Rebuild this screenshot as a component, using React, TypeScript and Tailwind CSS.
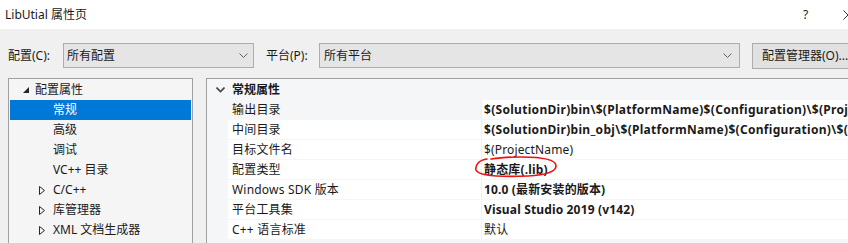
import React from "react";

const font = { fontFamily: '"Noto Sans", "Noto Sans CJK SC", sans-serif' };

function Chevron() {
  return (
    <svg width="9" height="6" viewBox="0 0 9 6">
      <polyline points="0.5,0.5 4.5,4.5 8.5,0.5" fill="none" stroke="#606060" strokeWidth="1" />
    </svg>
  );
}

function Expanded() {
  return (
    <svg width="6" height="6" viewBox="0 0 6 6">
      <polygon points="6,0 6,6 0,6" fill="#262626" />
    </svg>
  );
}

function Collapsed() {
  return (
    <svg width="6" height="9" viewBox="0 0 6 9">
      <polygon points="0.5,0.5 5.5,4.5 0.5,8.5" fill="none" stroke="#262626" strokeWidth="1" />
    </svg>
  );
}

const treeItems: { text: string; icon?: "col"; selected?: boolean }[] = [
  { text: "常规", selected: true },
  { text: "高级" },
  { text: "调试" },
  { text: "VC++ 目录" },
  { text: "C/C++", icon: "col" },
  { text: "库管理器", icon: "col" },
  { text: "XML 文档生成器", icon: "col" },
];

const rows: { label: string; value: string; bold: boolean; first?: boolean; wide?: boolean }[] = [
  { label: "输出目录", value: "$(SolutionDir)bin\\$(PlatformName)$(Configuration)\\$(Proj", bold: true, first: true, wide: true },
  { label: "中间目录", value: "$(SolutionDir)bin_obj\\$(PlatformName)$(Configuration)\\$(", bold: true, wide: true },
  { label: "目标文件名", value: "$(ProjectName)", bold: false },
  { label: "配置类型", value: "静态库(.lib)", bold: true },
  { label: "Windows SDK 版本", value: "10.0 (最新安装的版本)", bold: true },
  { label: "平台工具集", value: "Visual Studio 2019 (v142)", bold: true },
  { label: "C++ 语言标准", value: "默认", bold: false },
];

export default function App() {
  return (
    <div className="w-[848px] h-[243px] overflow-hidden bg-[#f0f0f0] text-[12px] text-[#1a1a1a] relative" style={font}>
      {/* title bar */}
      <div className="h-[29px] bg-white flex items-center pl-[5px] relative">
        <span className="text-[12px]">LibUtial 属性页</span>
        <span className="absolute left-[803px] top-[6px] text-[12px]">?</span>
        <svg className="absolute left-[843px] top-[10px]" width="10" height="10" viewBox="0 0 10 10">
          <path d="M0.5 0.5 L9.5 9.5 M9.5 0.5 L0.5 9.5" stroke="#333" strokeWidth="1" />
        </svg>
      </div>

      {/* toolbar */}
      <div className="flex items-start pt-[14px] pb-[9px] pl-[8px]">
        <span className="w-[55px] shrink-0 whitespace-nowrap leading-[25px]">配置(C):</span>
        <div className="w-[191px] shrink-0 h-[25px] border border-[#adadad] bg-[#e5e5e5] flex items-center pl-[3px] pr-[5px] justify-between">
          <span>所有配置</span>
          <Chevron />
        </div>
        <span className="ml-[12px] w-[53px] shrink-0 whitespace-nowrap leading-[25px]">平台(P):</span>
        <div className="w-[421px] shrink-0 h-[25px] border border-[#adadad] bg-[#e5e5e5] flex items-center pl-[4px] pr-[7px] justify-between">
          <span>所有平台</span>
          <Chevron />
        </div>
        <div className="ml-[12px] w-[120px] shrink-0 h-[26px] border border-[#adadad] bg-[#e1e1e1] flex items-center pl-[9px] whitespace-nowrap">
          配置管理器(O)...
        </div>
      </div>

      {/* panels */}
      <div className="flex pl-[8px] gap-[13px]">
        <div className="w-[185px] shrink-0 h-[170px] border border-[#a0a0a0] bg-[#f5f5f5] px-[1px]">
          <div className="h-[21px] flex items-center">
            <span className="w-[25px] flex justify-end pr-[6px] pt-[1px]"><Expanded /></span>
            <span>配置属性</span>
          </div>
          {treeItems.map((t) => (
            <div
              key={t.text}
              className={`h-[20px] flex items-center ${t.selected ? "bg-[#0078d7] text-white" : ""}`}
            >
              <span className="w-[43px] flex justify-end pr-[8px]">{t.icon === "col" ? <Collapsed /> : null}</span>
              <span className="whitespace-nowrap">{t.text}</span>
            </div>
          ))}
        </div>

        <div className="flex-1 min-w-0 h-[170px] border-l border-t border-[#a0a0a0] bg-[#f5f6f7] relative overflow-hidden">
          <div className="h-[21px] flex items-center">
            <span className="w-[25px] flex justify-center pl-[2px]">
              <svg width="9" height="6" viewBox="0 0 9 6">
                <polyline points="0.5,0.5 4.5,4.5 8.5,0.5" fill="none" stroke="#444" strokeWidth="1.6" />
              </svg>
            </span>
            <span className="font-bold">常规属性</span>
          </div>
          {rows.map((r) => (
            <div key={r.label} className="h-[20px] flex pl-[21px]">
              <div className={`w-[253px] shrink-0 h-[19px] flex items-center pl-[4px] ${r.first ? "bg-[#f5f6f7]" : "bg-white"}`}>
                <span className="whitespace-nowrap tracking-[0.2px]">{r.label}</span>
              </div>
              <div className="w-[1px] shrink-0 h-[19px] bg-[#f0f0f0]" />
              <div className="flex-1 min-w-0 h-[19px] bg-white flex items-center pl-[2px] overflow-hidden">
                <span className={`whitespace-nowrap ${r.wide ? "tracking-[0.3px]" : "tracking-[0.15px]"} ${r.bold ? "font-bold" : ""}`}>{r.value}</span>
              </div>
            </div>
          ))}
          {/* red hand-drawn circle */}
          <svg className="absolute left-[266px] top-[77px]" width="86" height="23" viewBox="0 0 86 23">
            <path
              d="M14 3 C6 4 2 9 3 14 C5 20 28 21 55 20 C72 19 83 16 83 10 C83 4 70 1 48 1 C34 1 24 2 18 3"
              fill="none"
              stroke="#e11"
              strokeWidth="1.6"
              strokeLinecap="round"
            />
          </svg>
        </div>
      </div>
    </div>
  );
}
